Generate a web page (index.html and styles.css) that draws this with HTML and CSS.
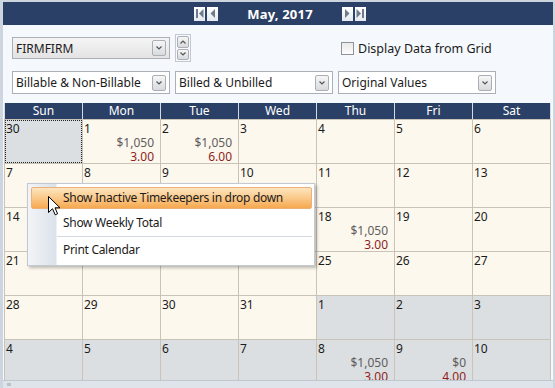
FILE: index.html
```html
<!DOCTYPE html>
<html lang="en">
  <head>
    <title>Calendar</title>
    <meta charset="UTF-8" />
    <meta name="viewport" content="width=device-width" />
    <link rel="stylesheet" href="styles.css">
  </head>
  <body>
    <div class="app">
      <!-- month navigation -->
      <header class="titlebar">
        <div class="nav">
          <span class="nav-btn">
            <svg width="8" height="9" viewBox="0 0 8 9"><rect x="0" y="0" width="2" height="9" fill="#6f7a8a"/><path d="M7.5 0 L3 4.5 L7.5 9 Z" fill="#6f7a8a"/></svg>
          </span>
          <span class="nav-btn">
            <svg width="8" height="9" viewBox="0 0 8 9"><path d="M6 0 L1.5 4.5 L6 9 Z" fill="#6f7a8a"/></svg>
          </span>
        </div>
        <span class="month">May, 2017</span>
        <div class="nav">
          <span class="nav-btn">
            <svg width="8" height="9" viewBox="0 0 8 9"><path d="M2 0 L6.5 4.5 L2 9 Z" fill="#6f7a8a"/></svg>
          </span>
          <span class="nav-btn">
            <svg width="8" height="9" viewBox="0 0 8 9"><path d="M0.5 0 L5 4.5 L0.5 9 Z" fill="#6f7a8a"/><rect x="6" y="0" width="2" height="9" fill="#6f7a8a"/></svg>
          </span>
        </div>
      </header>

      <!-- filters -->
      <section class="filters">
        <div class="combo combo-gray">
          <span class="combo-text">FIRMFIRM</span>
          <span class="drop"><svg width="10" height="10" viewBox="0 0 10 10"><path d="M2.5 3.5 L5 6 L7.5 3.5" fill="none" stroke="#555" stroke-width="1.2"/></svg></span>
        </div>
        <div class="spin">
          <span class="spin-btn"><svg width="10" height="8" viewBox="0 0 10 8"><path d="M2.5 5.5 L5 3 L7.5 5.5" fill="none" stroke="#555" stroke-width="1.2"/></svg></span>
          <span class="spin-btn"><svg width="10" height="8" viewBox="0 0 10 8"><path d="M2.5 2.5 L5 5 L7.5 2.5" fill="none" stroke="#555" stroke-width="1.2"/></svg></span>
        </div>
        <label class="check"><span class="check-box"></span>Display Data from Grid</label>

        <div class="combo">
          <span class="combo-text">Billable &amp; Non-Billable</span>
          <span class="drop"><svg width="10" height="10" viewBox="0 0 10 10"><path d="M2.5 3.5 L5 6 L7.5 3.5" fill="none" stroke="#555" stroke-width="1.2"/></svg></span>
        </div>
        <div class="combo">
          <span class="combo-text">Billed &amp; Unbilled</span>
          <span class="drop"><svg width="10" height="10" viewBox="0 0 10 10"><path d="M2.5 3.5 L5 6 L7.5 3.5" fill="none" stroke="#555" stroke-width="1.2"/></svg></span>
        </div>
        <div class="combo">
          <span class="combo-text">Original Values</span>
          <span class="drop"><svg width="10" height="10" viewBox="0 0 10 10"><path d="M2.5 3.5 L5 6 L7.5 3.5" fill="none" stroke="#555" stroke-width="1.2"/></svg></span>
        </div>
      </section>

      <!-- calendar grid -->
      <div class="calendar">
        <div class="weekdays">
          <span>Sun</span><span>Mon</span><span>Tue</span><span>Wed</span><span>Thu</span><span>Fri</span><span>Sat</span>
        </div>
        <div class="days">
          <div class="day other focus">30</div>
          <div class="day">1<span class="amt">$1,050</span><span class="hrs">3.00</span></div>
          <div class="day">2<span class="amt">$1,050</span><span class="hrs">6.00</span></div>
          <div class="day">3</div>
          <div class="day">4</div>
          <div class="day">5</div>
          <div class="day">6</div>

          <div class="day">7</div>
          <div class="day">8</div>
          <div class="day">9</div>
          <div class="day">10</div>
          <div class="day">11</div>
          <div class="day">12</div>
          <div class="day">13</div>

          <div class="day">14</div>
          <div class="day">15</div>
          <div class="day">16</div>
          <div class="day">17</div>
          <div class="day">18<span class="amt">$1,050</span><span class="hrs">3.00</span></div>
          <div class="day">19</div>
          <div class="day">20</div>

          <div class="day">21</div>
          <div class="day">22</div>
          <div class="day">23</div>
          <div class="day">24</div>
          <div class="day">25</div>
          <div class="day">26</div>
          <div class="day">27</div>

          <div class="day">28</div>
          <div class="day">29</div>
          <div class="day">30</div>
          <div class="day">31</div>
          <div class="day other">1</div>
          <div class="day other">2</div>
          <div class="day other">3</div>

          <div class="day other">4</div>
          <div class="day other">5</div>
          <div class="day other">6</div>
          <div class="day other">7</div>
          <div class="day other">8<span class="amt">$1,050</span><span class="hrs">3.00</span></div>
          <div class="day other">9<span class="amt">$0</span><span class="hrs">4.00</span></div>
          <div class="day other">10</div>
        </div>
      </div>

      <div class="statusbar"><span class="grip"></span></div>
    </div>

    <!-- right click menu -->
    <div class="menu">
      <div class="menu-item active">Show Inactive Timekeepers in drop down</div>
      <div class="menu-item">Show Weekly Total</div>
      <div class="menu-sep"></div>
      <div class="menu-item">Print Calendar</div>
    </div>

    <svg class="cursor" width="13" height="20" viewBox="0 0 13 20">
      <path d="M0.5 0.5 L0.5 16.5 L4.5 12.7 L7.2 18.8 L9.6 17.8 L7 11.8 L12 11.8 Z" fill="#fff" stroke="#000" stroke-width="1" stroke-linejoin="round"/>
    </svg>
  </body>
</html>
```

FILE: styles.css
```css
* {
  box-sizing: border-box;
}

body {
  margin: 0;
  width: 555px;
  height: 388px;
  overflow: hidden;
  position: relative;
  font-family: "Noto Sans", "Open Sans", sans-serif;
  font-size: 12px;
  color: #1b1b1b;
  background-color: #f5f8fc;
}

/* window frame */
.app {
  height: 388px;
  display: flex;
  flex-direction: column;
  border-style: solid;
  border-color: #cdd5df;
  border-width: 2px 2px 0 3px;
}

/* navy month bar */
.titlebar {
  height: 23px;
  flex-shrink: 0;
  background-color: #2b4066;
  display: flex;
  align-items: center;
  justify-content: center;
  gap: 29px;
  padding-left: 4px;
}

.nav {
  display: flex;
  gap: 2px;
}

.nav-btn {
  width: 11px;
  height: 14px;
  background: linear-gradient(#ffffff, #e4e9ef);
  display: flex;
  align-items: center;
  justify-content: center;
}

.month {
  color: #fff;
  font-weight: bold;
  font-size: 13px;
  letter-spacing: 0.2px;
}

/* filters area */
.filters {
  display: grid;
  grid-template-columns: 158px 158px 158px;
  grid-template-rows: 28px 23px;
  column-gap: 5px;
  row-gap: 9px;
  padding: 9px 0 9px 9px;
  align-items: center;
}

.combo {
  height: 23px;
  border: 1px solid #abb0b8;
  background-color: #fff;
  display: flex;
  align-items: center;
  justify-content: space-between;
  padding: 0 3px 0 3px;
}

.combo-gray {
  height: 22px;
  background: linear-gradient(#f5f5f5, #e3e3e3);
}

.combo-text {
  white-space: nowrap;
}

.drop {
  width: 14px;
  height: 16px;
  border: 1px solid #a9afb7;
  border-radius: 2px;
  background: linear-gradient(#f6f6f6, #d8dadd);
  display: flex;
  align-items: center;
  justify-content: center;
}

.spin {
  width: 16px;
  height: 28px;
  border: 1px solid #c4c9d0;
  padding: 1px;
  display: flex;
  flex-direction: column;
  gap: 1px;
}

.spin-btn {
  flex: 1;
  border: 1px solid #aab0b8;
  border-radius: 2px;
  background: linear-gradient(#f6f6f6, #d8dadd);
  display: flex;
  align-items: center;
  justify-content: center;
}

.check {
  display: flex;
  align-items: center;
  gap: 4px;
  margin-left: 3px;
  font-size: 12.5px;
}

.check-box {
  width: 13px;
  height: 13px;
  border: 1px solid #8f9297;
  background: linear-gradient(#e9e9e9, #fdfdfd);
}

/* calendar */
.calendar {
  height: 277px;
  overflow: hidden;
  margin-left: 1px;
  width: 547px;
}

.weekdays {
  display: grid;
  grid-template-columns: repeat(7, 77px);
  gap: 1px;
  padding: 0 1px;
  background-color: #d3dae3;
  height: 16px;
}

.weekdays span {
  background-color: #2b4066;
  color: #fff;
  text-align: center;
  line-height: 16px;
}

.days {
  display: grid;
  grid-template-columns: repeat(7, 77px);
  grid-auto-rows: 43px;
  gap: 1px;
  padding: 1px;
  background-color: #c9c3b8;
}

.day {
  background-color: #fdf8ee;
  padding: 2px 6px 0 1px;
  line-height: 14px;
  display: flex;
  flex-direction: column;
}

.day.other {
  background-color: #dcdfe1;
}

.day.focus {
  outline: 1px dotted #222;
  outline-offset: -1px;
}

.amt {
  text-align: right;
  color: #5d5d5d;
}

.hrs {
  text-align: right;
  color: #8e1d1d;
}

.statusbar {
  flex: 1;
  background-color: #dfe4ea;
  border-top: 1px solid #bfc7d1;
  padding: 2px 0 0 4px;
}

.grip {
  display: block;
  width: 4px;
  height: 3px;
  background-color: #b9c1cb;
}

/* context menu */
.menu {
  position: absolute;
  left: 27px;
  top: 183px;
  width: 288px;
  height: 83px;
  border: 1px solid #c3c9d1;
  padding: 3px 2px 3px 3px;
  background: linear-gradient(to right, #f2f4f7 0, #dbe2ea 28px, #ffffff 29px);
  box-shadow: 2px 2px 3px rgba(0, 0, 0, 0.25);
}

.menu-item {
  height: 22px;
  line-height: 20px;
  padding-left: 31px;
  border: 1px solid transparent;
  margin-bottom: 3px;
  white-space: nowrap;
  letter-spacing: -0.3px;
}

.menu-item.active {
  border-color: #eab27a;
  border-radius: 2px;
  background: linear-gradient(#fde5c0, #fbc98a 50%, #f6a84f);
}

.menu-sep {
  height: 1px;
  margin: -1px 0 2px 26px;
  background-color: #d4d9df;
}

.cursor {
  position: absolute;
  left: 48px;
  top: 196px;
}
```
